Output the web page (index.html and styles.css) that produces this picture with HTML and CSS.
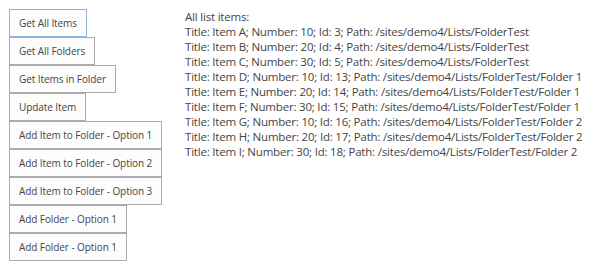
FILE: index.html
```html
<!DOCTYPE html>
<html>
<head>
<meta charset="utf-8">
<link rel="stylesheet" href="styles.css">
</head>
<body>
<div class="page">
  <div class="actions">
    <button class="btn btn-focus">Get All Items</button>
    <button class="btn">Get All Folders</button>
    <button class="btn">Get Items in Folder</button>
    <button class="btn">Update Item</button>
    <button class="btn">Add Item to Folder - Option 1</button>
    <button class="btn">Add Item to Folder - Option 2</button>
    <button class="btn">Add Item to Folder - Option 3</button>
    <button class="btn">Add Folder - Option 1</button>
    <button class="btn">Add Folder - Option 1</button>
  </div>
  <div class="output">
    <div class="line">All list items:</div>
    <div class="line">Title: Item A; Number: 10; Id: 3; Path: /sites/demo4/Lists/FolderTest</div>
    <div class="line">Title: Item B; Number: 20; Id: 4; Path: /sites/demo4/Lists/FolderTest</div>
    <div class="line">Title: Item C; Number: 30; Id: 5; Path: /sites/demo4/Lists/FolderTest</div>
    <div class="line">Title: Item D; Number: 10; Id: 13; Path: /sites/demo4/Lists/FolderTest/Folder 1</div>
    <div class="line">Title: Item E; Number: 20; Id: 14; Path: /sites/demo4/Lists/FolderTest/Folder 1</div>
    <div class="line">Title: Item F; Number: 30; Id: 15; Path: /sites/demo4/Lists/FolderTest/Folder 1</div>
    <div class="line">Title: Item G; Number: 10; Id: 16; Path: /sites/demo4/Lists/FolderTest/Folder 2</div>
    <div class="line">Title: Item H; Number: 20; Id: 17; Path: /sites/demo4/Lists/FolderTest/Folder 2</div>
    <div class="line">Title: Item I; Number: 30; Id: 18; Path: /sites/demo4/Lists/FolderTest/Folder 2</div>
  </div>
</div>
</body>
</html>
```
FILE: styles.css
```css
html, body {
  margin: 0;
  padding: 0;
  background: #ffffff;
}
body {
  padding: 9px 0 0 9px;
  font-family: "Open Sans", "Noto Sans", sans-serif;
  color: #444444;
}
.page {
  display: flex;
  align-items: flex-start;
}
.actions {
  display: flex;
  flex-direction: column;
  align-items: flex-start;
  width: 176px;
  flex: none;
}
.btn {
  height: 28px;
  box-sizing: border-box;
  margin: 0;
  padding: 0 9px;
  border: 1px solid #ababab;
  background: #fdfdfd;
  color: #444444;
  font-family: "Open Sans", "Noto Sans", sans-serif;
  font-size: 10px;
  letter-spacing: -0.08px;
  line-height: 26px;
  text-align: left;
  white-space: nowrap;
}
.btn-focus {
  border-color: #8fb3e3;
}
.output {
  font-size: 11.5px;
  letter-spacing: -0.2px;
  line-height: 15px;
}
.line {
  white-space: nowrap;
}
```
